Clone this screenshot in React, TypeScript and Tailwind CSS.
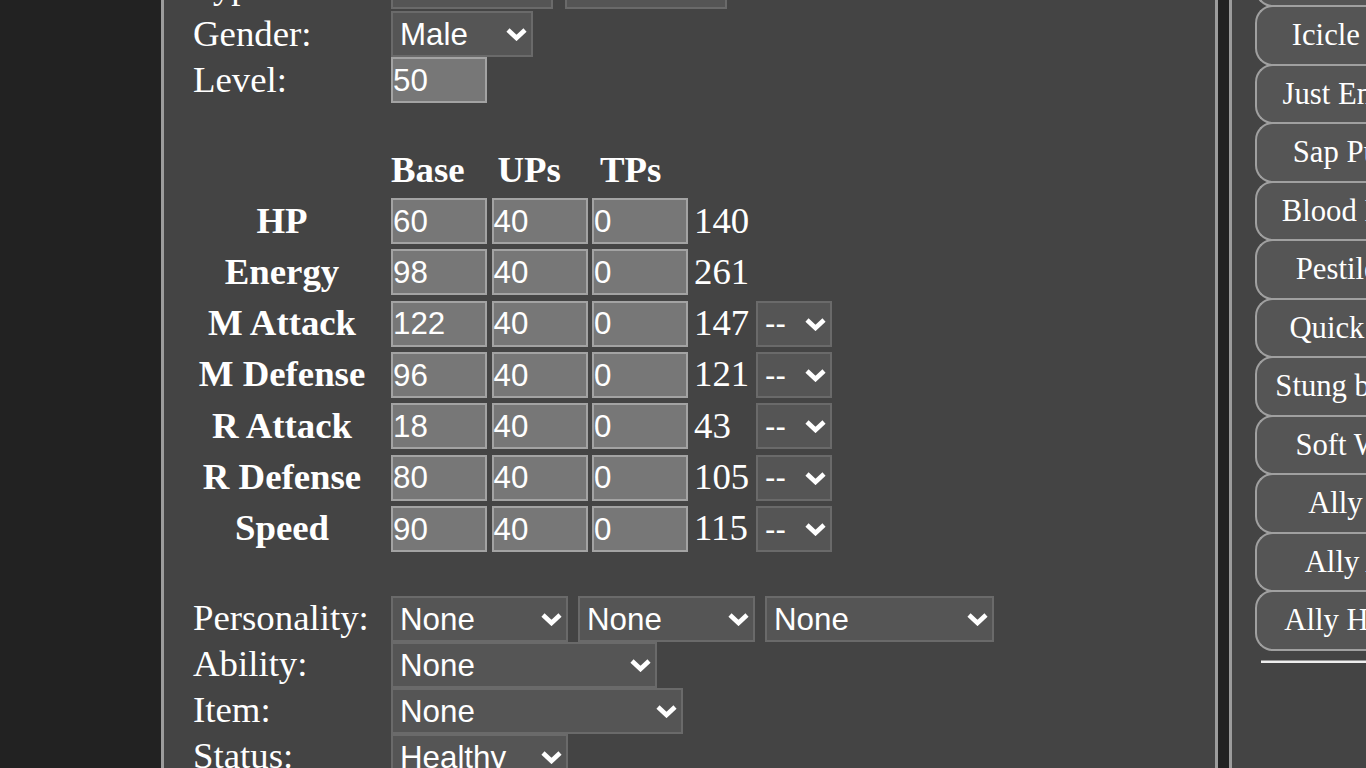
import React from 'react'

const serif = "font-['Liberation_Serif',serif]"
const sans = "font-['Liberation_Sans',sans-serif]"

function Chevron() {
  return (
    <svg width="23" height="14" viewBox="0 0 23 14" aria-hidden="true" className="shrink-0">
      <polyline points="3,3 11.5,11 20,3" fill="none" stroke="white" strokeWidth="4.6" />
    </svg>
  )
}

function Select({value, className}: {value: string; className: string}) {
  return (
    <div
      className={`flex h-[46px] items-center justify-between border-2 border-[#6a6a6a] bg-[#555] pl-[7px] pr-[3px] text-[31.3px] text-white ${sans} ${className}`}
    >
      <span className="pt-[2px]">{value}</span>
      <Chevron />
    </div>
  )
}

function NumBox({value}: {value: string}) {
  return (
    <div className={`flex h-[46px] w-[96px] items-center border-2 border-[#a3a3a3] bg-[#777] pt-[2px] text-[31.3px] text-white ${sans}`}>
      {value}
    </div>
  )
}

function FormRow({label, children, className = ''}: {label: string; children: React.ReactNode; className?: string}) {
  return (
    <div className={`flex h-[46px] items-center ${className}`}>
      <div className="w-[198px] pb-[2px] text-[36.8px] leading-[41px]">{label}</div>
      <div className="flex h-full items-center gap-[10px]">{children}</div>
    </div>
  )
}

const stats = [
  {name: 'HP', base: '60', total: '140', nature: false},
  {name: 'Energy', base: '98', total: '261', nature: false},
  {name: 'M Attack', base: '122', total: '147', nature: true},
  {name: 'M Defense', base: '96', total: '121', nature: true},
  {name: 'R Attack', base: '18', total: '43', nature: true},
  {name: 'R Defense', base: '80', total: '105', nature: true},
  {name: 'Speed', base: '90', total: '115', nature: true},
]

const moves = [
  'Frost Bite',
  'Icicle Wall',
  'Just Enough',
  'Sap Punch',
  'Blood Drain',
  'Pestilence',
  'Quick Step',
  'Stung by Bee',
  'Soft Wind',
  'Ally Up',
  'Ally Aid',
  'Ally Hunter',
]

export default function App() {
  return (
    <div className={`flex h-screen w-full overflow-hidden bg-[#222] text-white ${serif}`}>
      <div className="w-[161px] shrink-0" />

      {/* editor panel */}
      <div className="h-full w-[1057px] shrink-0 border-x-[3px] border-[#9c9c9c] bg-[#444] pl-[29px]">
        <div className="-mt-[37px]">
          <FormRow label="Type:">
            <Select value="" className="w-[162px]" />
            <div className="ml-[2px]">
              <Select value="" className="w-[162px]" />
            </div>
          </FormRow>
          <FormRow label="Gender:" className="mt-[2px]">
            <Select value="Male" className="w-[142px]" />
          </FormRow>
          <FormRow label="Level:">
            <NumBox value="50" />
          </FormRow>

          <div className="mt-[46px] flex h-[41px] text-[36.8px] font-bold leading-[41px]">
            <div className="w-[198px]" />
            <div className="w-[100.5px]">Base</div>
            <div className="w-[100.5px] pl-[6px]">UPs</div>
            <div className="pl-[8px]">TPs</div>
          </div>

          <div className="mt-[8px] flex flex-col gap-[5.33px]">
            {stats.map((s) => (
              <div key={s.name} className="flex h-[46px] items-center">
                <div className="w-[178px] pb-[2px] text-center text-[36.8px] font-bold leading-[41px]">{s.name}</div>
                <div className="ml-[20px] flex gap-[4.5px]">
                  <NumBox value={s.base} />
                  <NumBox value="40" />
                  <NumBox value="0" />
                </div>
                <div className="w-[68px] pb-[2px] pl-[6px] text-[36.8px] leading-[41px]">{s.total}</div>
                {s.nature ? <Select value="--" className="w-[76px]" /> : null}
              </div>
            ))}
          </div>

          <FormRow label="Personality:" className="mt-[44px]">
            <Select value="None" className="w-[177px]" />
            <Select value="None" className="w-[177px]" />
            <Select value="None" className="w-[229px]" />
          </FormRow>
          <FormRow label="Ability:">
            <Select value="None" className="w-[266px]" />
          </FormRow>
          <FormRow label="Item:">
            <Select value="None" className="w-[292px]" />
          </FormRow>
          <FormRow label="Status:">
            <Select value="Healthy" className="w-[177px]" />
          </FormRow>
        </div>
      </div>

      <div className="w-[11px] shrink-0" />

      {/* move list */}
      <div className="h-full w-[300px] shrink-0 border-l-[3px] border-[#9c9c9c] bg-[#444] pl-[23px]">
        <div className="-mt-[53.5px] flex flex-col">
          {moves.map((m, i) => (
            <div
              key={m}
              className={`flex h-[60.5px] w-[204px] items-center justify-center rounded-l-[18px] border-2 border-r-0 border-[#a0a0a0] bg-[#555] text-[30.7px] whitespace-nowrap ${
                i > 0 ? '-mt-[2px]' : ''
              }`}
            >
              {m}
            </div>
          ))}
          <div className="mt-[9px] ml-[6px]">
            <div className="h-[1px] bg-[#999]" />
            <div className="h-[2px] bg-[#eee]" />
          </div>
        </div>
      </div>
    </div>
  )
}
